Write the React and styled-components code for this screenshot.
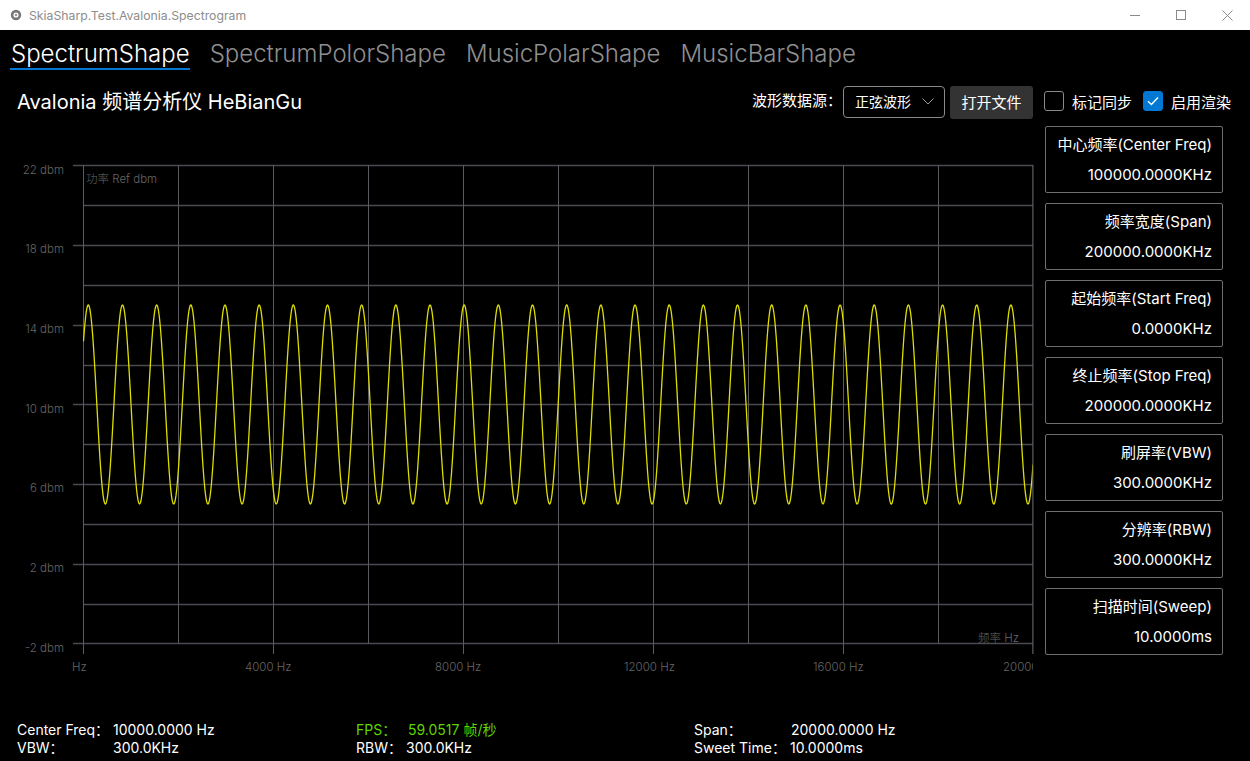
import React from 'react';
import styled, { createGlobalStyle } from 'styled-components';

const GlobalStyle = createGlobalStyle`
  html, body {
    margin: 0;
    padding: 0;
    background: #000;
  }
  * {
    box-sizing: border-box;
  }
`;

const FONT = `Inter, "Noto Sans CJK SC", sans-serif`;

const Page = styled.div`
  width: 1250px;
  height: 761px;
  display: flex;
  flex-direction: column;
  background: #000;
  color: #fff;
  font-family: ${FONT};
  overflow: hidden;
`;

const TitleBar = styled.div`
  height: 30px;
  flex: none;
  display: flex;
  align-items: center;
  padding-left: 10px;
  background: #fff;
`;

const AppTitle = styled.span`
  margin-left: 7px;
  flex: 1;
  font-size: 12.25px;
  color: #8c8c8c;
`;

const WinButton = styled.div`
  width: 46px;
  height: 30px;
  display: flex;
  align-items: center;
  justify-content: center;
`;

const Tabs = styled.div`
  height: 45px;
  flex: none;
  display: flex;
  gap: 19px;
  padding: 0 0 0 10px;
`;

const Tab = styled.div`
  height: 35px;
  margin-top: 5px;
  padding: 2px 0 0 1px;
  font-size: 24px;
  font-weight: 300;
  line-height: 34px;
  white-space: nowrap;
  color: ${(p) => (p.$active ? '#fff' : '#8f8f8f')};
  border-bottom: 2px solid ${(p) => (p.$active ? '#0078d4' : 'transparent')};
`;

const Body = styled.div`
  height: 641px;
  flex: none;
  display: grid;
  grid-template-columns: 1033px 1fr;
  grid-template-rows: 51px 1fr;
`;

const Header = styled.div`
  grid-column: 1 / 2;
  display: flex;
  align-items: center;
  justify-content: space-between;
  padding: 11px 0 8px 17px;
`;

const Heading = styled.div`
  font-size: 20px;
  line-height: 26px;
  white-space: nowrap;
`;

const Controls = styled.div`
  display: flex;
  align-items: center;
`;

const SourceLabel = styled.span`
  font-size: 15px;
  line-height: 20px;
  margin-right: 1px;
  padding-bottom: 2px;
`;

const Select = styled.div`
  width: 102px;
  height: 32px;
  display: flex;
  align-items: center;
  justify-content: space-between;
  padding: 0 10px 2px 11px;
  margin-right: 5px;
  border: 1px solid #8a8a8a;
  border-radius: 4px;
  font-size: 14px;
`;

const OpenButton = styled.div`
  width: 83px;
  height: 33px;
  display: flex;
  align-items: center;
  justify-content: center;
  padding-bottom: 2px;
  border-radius: 3px;
  background: #333;
  font-size: 15px;
`;

const Checks = styled.div`
  grid-column: 2;
  display: flex;
  align-items: center;
  padding: 9px 0 8px 11px;
`;

const CheckItem = styled.div`
  display: flex;
  align-items: center;
  gap: 8px;
  margin-right: 11px;
  font-size: 15px;
  white-space: nowrap;
`;

const Box = styled.div`
  width: 20px;
  height: 20px;
  flex: none;
  display: flex;
  align-items: center;
  justify-content: center;
  border-radius: 3px;
  background: ${(p) => (p.$checked ? '#0078d4' : 'transparent')};
  border: 1px solid ${(p) => (p.$checked ? '#0078d4' : '#8a8a8a')};
`;

const ChartArea = styled.div`
  height: 590px;
`;

const ChartLabel = styled.text`
  font-family: ${FONT};
  font-size: 11.5px;
  font-weight: 300;
  fill: #666;
`;

const Cards = styled.div`
  display: flex;
  flex-direction: column;
  gap: 10px;
  padding: 0 27px 0 12px;
`;

const Card = styled.div`
  height: 67px;
  display: flex;
  flex-direction: column;
  align-items: flex-end;
  justify-content: space-between;
  padding: 8px 10px 7px 0;
  border: 1px solid #6e6e6e;
  border-radius: 2px;
  font-size: 15px;
  line-height: 20px;
  white-space: nowrap;
`;

const Footer = styled.div`
  flex: 1;
  display: grid;
  grid-template-columns: 339px 338px 1fr;
  padding: 5px 0 0 17px;
`;

const Stat = styled.div`
  display: flex;
  flex-direction: column;
  font-size: 14px;
  line-height: 18px;
  color: ${(p) => p.$color || '#fff'};
`;

const StatRow = styled.div`
  display: flex;
  white-space: nowrap;
  color: ${(p) => p.$color || 'inherit'};
`;

const StatName = styled.span`
  width: ${(p) => p.$width}px;
`;

const CHART_W = 1040;
const CHART_H = 590;
const OFFSET = 126; // chart top in page coordinates

const vLines = [83.5, 178.5, 273.5, 368.5, 463.5, 558.5, 653.5, 748.5, 843.5, 938.5, 1033];
const hLines = [165.5, 205.5, 245.5, 285.5, 325.5, 365.5, 404.5, 444.5, 484.5, 524.5, 564.5, 604.5, 643.5];
const yLabels = ['22 dbm', '18 dbm', '14 dbm', '10 dbm', '6 dbm', '2 dbm', '-2 dbm'];
const xLabels = [
  ['Hz', 72],
  ['4000 Hz', 245],
  ['8000 Hz', 435],
  ['12000 Hz', 624],
  ['16000 Hz', 813],
  ['20000 Hz', 1003],
];

function sinePath() {
  const pts = [];
  for (let x = 83.5; x <= 1033; x += 0.5) {
    const y = 404.5 - 99.5 * Math.cos(((x - 88.3) / 34.17) * Math.PI * 2);
    pts.push(`${x},${(y - OFFSET).toFixed(2)}`);
  }
  return 'M' + pts.join('L');
}

const Chart = () => (
  <svg width={CHART_W} height={CHART_H} viewBox={`0 0 ${CHART_W} ${CHART_H}`} style={{ display: 'block' }}>
    <defs>
      <clipPath id="plot">
        <rect x="0" y="0" width="1033" height={CHART_H} />
      </clipPath>
    </defs>
    <g clipPath="url(#plot)">
      {hLines.map((y, i) => (
        <line
          key={y}
          x1={i % 2 === 0 ? 73 : 83}
          x2="1033"
          y1={y - OFFSET}
          y2={y - OFFSET}
          stroke="#4a4a50"
          strokeWidth="1.3"
        />
      ))}
      {vLines.map((x, i) => (
        <line
          key={x}
          x1={x}
          x2={x}
          y1={165 - OFFSET}
          y2={(i % 2 === 0 ? 654 : 644) - OFFSET}
          stroke="#5a5a60"
          strokeWidth="1"
        />
      ))}
      {yLabels.map((t, i) => (
        <ChartLabel key={t} x="64" y={173.5 + i * 79.7 - OFFSET} textAnchor="end">
          {t}
        </ChartLabel>
      ))}
      {xLabels.map(([t, x]) => (
        <ChartLabel key={t} x={x} y={671 - OFFSET}>
          {t}
        </ChartLabel>
      ))}
      <ChartLabel x="86" y={183 - OFFSET}>功率 Ref dbm</ChartLabel>
      <ChartLabel x="978" y={642 - OFFSET}>频率 Hz</ChartLabel>
      <path d={sinePath()} fill="none" stroke="#dede00" strokeWidth="1.3" />
    </g>
    <line x1="1033" x2="1033" y1={165 - OFFSET} y2={654 - OFFSET} stroke="#5a5a60" strokeWidth="1" />
  </svg>
);

const cards = [
  ['中心频率(Center Freq)', '100000.0000KHz'],
  ['频率宽度(Span)', '200000.0000KHz'],
  ['起始频率(Start Freq)', '0.0000KHz'],
  ['终止频率(Stop Freq)', '200000.0000KHz'],
  ['刷屏率(VBW)', '300.0000KHz'],
  ['分辨率(RBW)', '300.0000KHz'],
  ['扫描时间(Sweep)', '10.0000ms'],
];

export default function App() {
  return (
    <Page>
      <GlobalStyle />
      <TitleBar>
        <svg width="12" height="12" viewBox="0 0 12 12">
          <circle cx="6" cy="6" r="3.9" fill="none" stroke="#777" strokeWidth="2.6" />
          <circle cx="6" cy="6" r="1.3" fill="#999" />
        </svg>
        <AppTitle>SkiaSharp.Test.Avalonia.Spectrogram</AppTitle>
        <WinButton>
          <svg width="10" height="10" viewBox="0 0 10 10">
            <line x1="0" x2="10" y1="5.5" y2="5.5" stroke="#8a8a8a" />
          </svg>
        </WinButton>
        <WinButton>
          <svg width="10" height="10" viewBox="0 0 10 10">
            <rect x="0.5" y="0.5" width="9" height="9" fill="none" stroke="#8a8a8a" />
          </svg>
        </WinButton>
        <WinButton>
          <svg width="11" height="11" viewBox="0 0 11 11">
            <path d="M0.5 0.5L10.5 10.5M10.5 0.5L0.5 10.5" stroke="#8a8a8a" />
          </svg>
        </WinButton>
      </TitleBar>
      <Tabs>
        <Tab $active>SpectrumShape</Tab>
        <Tab>SpectrumPolorShape</Tab>
        <Tab>MusicPolarShape</Tab>
        <Tab>MusicBarShape</Tab>
      </Tabs>
      <Body>
        <Header>
          <Heading>Avalonia 频谱分析仪 HeBianGu</Heading>
          <Controls>
            <SourceLabel>波形数据源：</SourceLabel>
            <Select>
              正弦波形
              <svg width="12" height="7" viewBox="0 0 12 7">
                <path d="M0.5 0.5L6 6L11.5 0.5" fill="none" stroke="#9a9a9a" />
              </svg>
            </Select>
            <OpenButton>打开文件</OpenButton>
          </Controls>
        </Header>
        <Checks>
          <CheckItem>
            <Box />
            标记同步
          </CheckItem>
          <CheckItem>
            <Box $checked>
              <svg width="12" height="10" viewBox="0 0 12 10">
                <path d="M1 5.2L4.4 8.4L11 1.4" fill="none" stroke="#fff" strokeWidth="1.4" />
              </svg>
            </Box>
            启用渲染
          </CheckItem>
        </Checks>
        <ChartArea>
          <Chart />
        </ChartArea>
        <Cards>
          {cards.map(([name, value]) => (
            <Card key={name}>
              <span>{name}</span>
              <span>{value}</span>
            </Card>
          ))}
        </Cards>
      </Body>
      <Footer>
        <Stat>
          <StatRow>
            <StatName $width={96}>Center Freq：</StatName>10000.0000 Hz
          </StatRow>
          <StatRow>
            <StatName $width={96}>VBW：</StatName>300.0KHz
          </StatRow>
        </Stat>
        <Stat>
          <StatRow $color="#5fd400">
            <StatName $width={52}>FPS：</StatName>59.0517 帧/秒
          </StatRow>
          <StatRow>
            <StatName $width={50}>RBW：</StatName>300.0KHz
          </StatRow>
        </Stat>
        <Stat>
          <StatRow>
            <StatName $width={97}>Span：</StatName>20000.0000 Hz
          </StatRow>
          <StatRow>
            <StatName $width={96}>Sweet Time：</StatName>10.0000ms
          </StatRow>
        </Stat>
      </Footer>
    </Page>
  );
}
